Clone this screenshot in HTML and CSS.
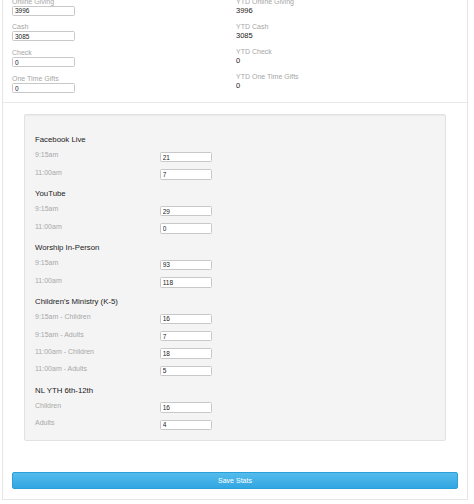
FILE: index.html
```html
<!DOCTYPE html>
<html>
<head>
<meta charset="utf-8">
<link rel="stylesheet" href="styles.css">
</head>
<body>
<div class="card">
  <div class="totals">
    <div class="col">
      <div class="field"><label class="lbl">Online Giving</label><input class="inp wide" value="3996"></div>
      <div class="field"><label class="lbl">Cash</label><input class="inp wide" value="3085"></div>
      <div class="field"><label class="lbl">Check</label><input class="inp wide" value="0"></div>
      <div class="field"><label class="lbl">One Time Gifts</label><input class="inp wide" value="0"></div>
    </div>
    <div class="col">
      <div class="ytd"><div class="lbl">YTD Online Giving</div><div class="val">3996</div></div>
      <div class="ytd"><div class="lbl">YTD Cash</div><div class="val">3085</div></div>
      <div class="ytd"><div class="lbl">YTD Check</div><div class="val">0</div></div>
      <div class="ytd"><div class="lbl">YTD One Time Gifts</div><div class="val">0</div></div>
    </div>
  </div>
  <div class="stats">
    <div class="well">
      <div class="group">
        <div class="gtitle">Facebook Live</div>
        <div class="row"><span class="rlbl">9:15am</span><input class="inp small" value="21"></div>
        <div class="row"><span class="rlbl">11:00am</span><input class="inp small" value="7"></div>
      </div>
      <div class="group">
        <div class="gtitle">YouTube</div>
        <div class="row"><span class="rlbl">9:15am</span><input class="inp small" value="29"></div>
        <div class="row"><span class="rlbl">11:00am</span><input class="inp small" value="0"></div>
      </div>
      <div class="group">
        <div class="gtitle">Worship In-Person</div>
        <div class="row"><span class="rlbl">9:15am</span><input class="inp small" value="93"></div>
        <div class="row"><span class="rlbl">11:00am</span><input class="inp small" value="118"></div>
      </div>
      <div class="group">
        <div class="gtitle">Children's Ministry (K-5)</div>
        <div class="row"><span class="rlbl">9:15am - Children</span><input class="inp small" value="16"></div>
        <div class="row"><span class="rlbl">9:15am - Adults</span><input class="inp small" value="7"></div>
        <div class="row"><span class="rlbl">11:00am - Children</span><input class="inp small" value="18"></div>
        <div class="row"><span class="rlbl">11:00am - Adults</span><input class="inp small" value="5"></div>
      </div>
      <div class="group">
        <div class="gtitle">NL YTH 6th-12th</div>
        <div class="row"><span class="rlbl">Children</span><input class="inp small" value="16"></div>
        <div class="row"><span class="rlbl">Adults</span><input class="inp small" value="4"></div>
      </div>
    </div>
    <button class="save">Save Stats</button>
  </div>
</div>
</body>
</html>
```
FILE: styles.css
```css
html, body {
  margin: 0;
  padding: 0;
  background: #ffffff;
  height: 504px;
  overflow: hidden;
}
body {
  font-family: "Liberation Sans", Arial, sans-serif;
  color: #333333;
}
.card {
  margin: -10px 6px 0 2px;
  border: 1px solid #e6e6e6;
  background: #ffffff;
}
.totals {
  display: grid;
  grid-template-columns: 224px 1fr;
  padding: 5.5px 9px 2.2px;
  border-bottom: 1px solid #e8e8e8;
}
.field {
  display: flex;
  flex-direction: column;
  align-items: flex-start;
  margin-bottom: 6.85px;
}
.lbl {
  display: block;
  font-size: 7px;
  line-height: 9px;
  color: #a6a6a6;
}
.ytd {
  margin-bottom: 7.3px;
}
.val {
  font-size: 7.5px;
  line-height: 9px;
  color: #1a1a1a;
}
.inp {
  box-sizing: border-box;
  height: 10px;
  border: 1px solid #c8c8c8;
  border-radius: 1.5px;
  background: #ffffff;
  font-family: "Liberation Sans", Arial, sans-serif;
  font-size: 6.5px;
  color: #222222;
  padding: 0 2px;
  margin: 0;
  outline: none;
}
.inp.wide {
  width: 62.5px;
}
.inp.small {
  width: 52px;
  height: 10.4px;
  margin-top: 3.47px;
}
.stats {
  padding: 10.9px 9px 10px;
}
.well {
  margin: 0 12px 31.7px;
  padding: 19.3px 10px 6.3px;
  background: #f4f4f4;
  border: 1px solid #e2e2e2;
  border-radius: 2px;
  box-shadow: inset 0 1px 1px rgba(0, 0, 0, 0.04);
}
.group + .group {
  margin-top: 5.1px;
}
.gtitle {
  font-size: 7.8px;
  line-height: 12px;
  color: #222222;
  margin-bottom: 2.2px;
}
.row {
  display: flex;
  align-items: flex-start;
  height: 17.33px;
}
.rlbl {
  width: 124.7px;
  flex: none;
  font-size: 7px;
  line-height: 14px;
  color: #a8a8a8;
}
.save {
  display: block;
  box-sizing: border-box;
  width: 100%;
  height: 16.6px;
  margin: 0;
  padding: 0;
  border: 1px solid #2aa0da;
  border-radius: 2px;
  background: linear-gradient(#55bcec, #31a6e2);
  color: #ffffff;
  font-family: "Liberation Sans", Arial, sans-serif;
  font-size: 7px;
  line-height: 14px;
}
```
